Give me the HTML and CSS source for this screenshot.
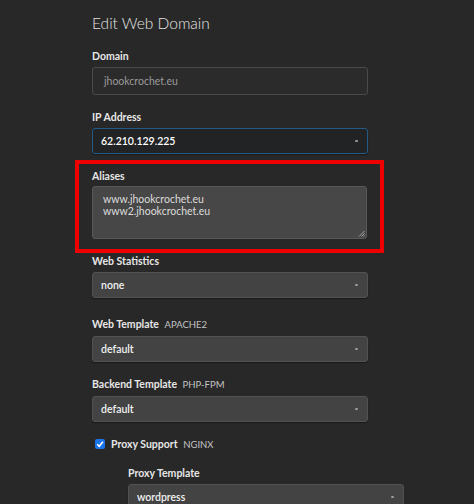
FILE: index.html
```html
<!DOCTYPE html>
<html>
<head>
<meta charset="utf-8">
<link rel="stylesheet" href="styles.css">
</head>
<body>
<div class="page">
  <h1 class="title">Edit Web Domain</h1>

  <div class="group">
    <div class="label">Domain</div>
    <div class="input disabled">jhookcrochet.eu</div>
  </div>

  <div class="group ip">
    <div class="label">IP Address</div>
    <div class="select focus"><span>62.210.129.225</span><span class="caret"></span></div>
  </div>

  <div class="highlight">
    <div class="label">Aliases</div>
    <div class="textarea">
      <div>www.jhookcrochet.eu</div>
      <div>www2.jhookcrochet.eu</div>
      <svg class="grip" width="7" height="7" viewBox="0 0 7 7"><path d="M6.5 1 L1 6.5 M6.5 3.5 L3.5 6.5 M6.5 5.5 L5.5 6.5" stroke="#aaa" stroke-width="0.9"/></svg>
    </div>
  </div>

  <div class="group stats">
    <div class="label">Web Statistics</div>
    <div class="select"><span>none</span><span class="caret"></span></div>
  </div>

  <div class="group tpl">
    <div class="label">Web Template <span class="hint">APACHE2</span></div>
    <div class="select"><span>default</span><span class="caret"></span></div>
  </div>

  <div class="group">
    <div class="label">Backend Template <span class="hint">PHP-FPM</span></div>
    <div class="select"><span>default</span><span class="caret"></span></div>
  </div>

  <div class="check-row">
    <span class="checkbox"><svg width="10" height="10" viewBox="0 0 10 10"><path d="M2.2 5.2 L4.2 7.2 L7.9 2.8" fill="none" stroke="#fff" stroke-width="1.6"/></svg></span>
    <span class="label inline">Proxy Support <span class="hint">NGINX</span></span>
  </div>

  <div class="sub">
    <div class="label">Proxy Template</div>
    <div class="select"><span>wordpress</span><span class="caret"></span></div>
  </div>
</div>
</body>
</html>
```

FILE: styles.css
```css
html, body {
  margin: 0;
  padding: 0;
  background: #282828;
  height: 100%;
  overflow: hidden;
}
body {
  font-family: Lato, "Open Sans", sans-serif;
  color: #e6e6e6;
}
.page {
  padding: 13px 0 0 92px;
  width: 276px;
}
.title {
  margin: 0 0 17px 0;
  font-size: 15.5px;
  line-height: 20px;
  font-weight: 300;
  color: #e4e4e4;
}
.group {
  margin-bottom: 16px;
}
.group.ip {
  margin-bottom: 0;
}
.group.stats {
  margin-bottom: 20px;
}
.label {
  font-size: 10.5px;
  line-height: 12px;
  font-weight: 700;
  color: #e6e6e6;
  margin-bottom: 5px;
}
.hint {
  font-weight: 400;
  font-size: 9.5px;
  color: #c4c4c4;
  margin-left: 3px;
}
.input, .select, .textarea {
  box-sizing: border-box;
  width: 276px;
  border-radius: 3px;
  font-size: 10.5px;
}
.input {
  height: 28px;
  display: flex;
  align-items: center;
  padding: 0 11px;
  background: #2b2b2b;
  border: 1px solid #4a4a4a;
  color: #9a9a9a;
}
.select {
  height: 26px;
  display: flex;
  align-items: center;
  justify-content: space-between;
  padding: 0 9px 0 8px;
  background: #434343;
  border: 1px solid #525252;
  color: #f2f2f2;
  font-weight: 600;
  box-shadow: 0 1px 1px rgba(0,0,0,0.35);
}
.select.focus {
  background: #222325;
  border-color: #245a86;
  color: #ffffff;
}
.caret {
  width: 3px;
  height: 2px;
  background: #9a9a9a;
  border-radius: 1px;
}
.highlight {
  margin: 6px -16px 2px -17px;
  border: 4px solid #ee0000;
  padding: 6px 12px 10px 13px;
}
.highlight .label {
  margin-bottom: 4px;
}
.textarea {
  position: relative;
  height: 53px;
  padding: 6px 10px;
  background: #474747;
  border: 1px solid #585858;
  color: #dcdcdc;
  line-height: 12px;
  width: 275px;
}
.grip {
  position: absolute;
  right: 1px;
  bottom: 1px;
}
.check-row {
  display: flex;
  align-items: center;
  height: 12px;
  margin-left: 3px;
}
.checkbox {
  width: 10px;
  height: 10px;
  background: #1a73e8;
  border-radius: 2px;
  display: flex;
  margin-right: 6px;
}
.label.inline {
  margin-bottom: 0;
  font-size: 10.5px;
}
.sub {
  margin: 17px 0 0 36px;
}
```
